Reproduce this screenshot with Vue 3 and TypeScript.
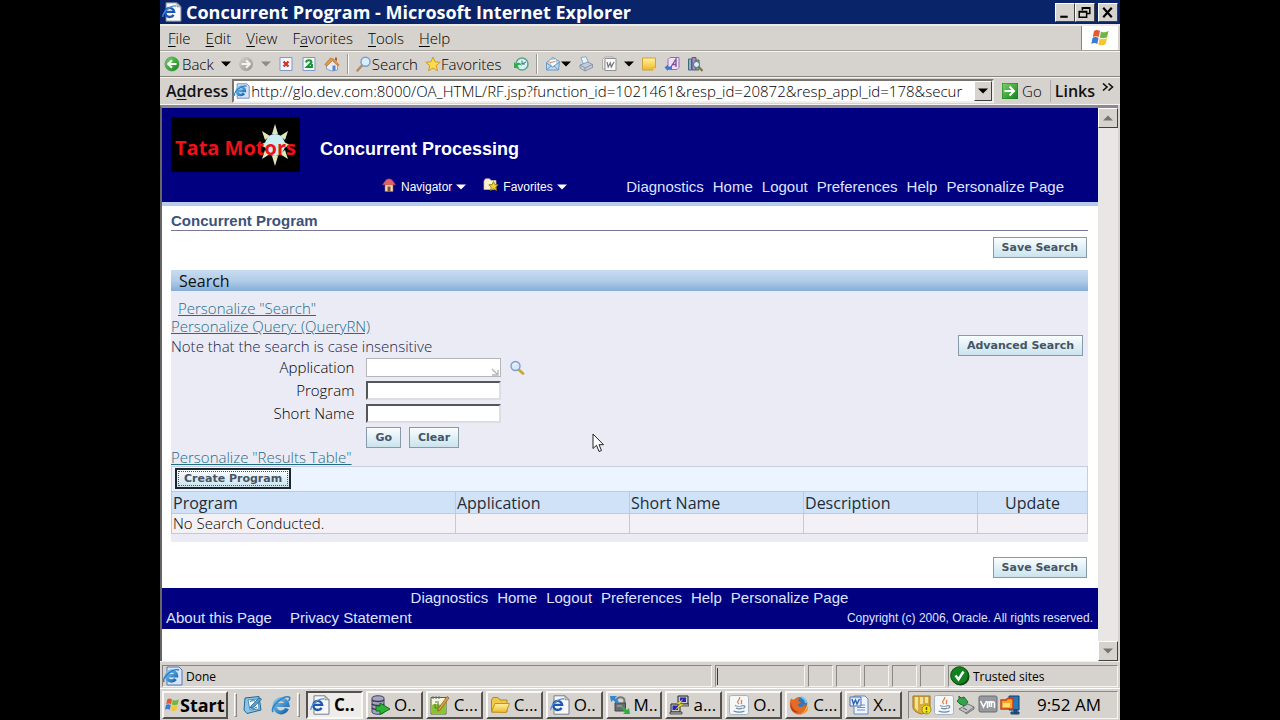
<script setup lang="ts">
import { ref } from 'vue'

interface Task {
  icon: string
  label: string
  active?: boolean
}

const menus = ['File', 'Edit', 'View', 'Favorites', 'Tools', 'Help']
const accessKeys = [0, 0, 0, 1, 0, 0]
const links = ['Diagnostics', 'Home', 'Logout', 'Preferences', 'Help', 'Personalize Page']
const tasks: Task[] = [
  { icon: 'page-ie', label: 'C..', active: true },
  { icon: 'server', label: 'O..' },
  { icon: 'notepad', label: 'C...' },
  { icon: 'folder', label: 'C...' },
  { icon: 'page-ie', label: 'O..' },
  { icon: 'lock', label: 'M..' },
  { icon: 'putty', label: 'a...' },
  { icon: 'java', label: 'O..' },
  { icon: 'firefox', label: 'C...' },
  { icon: 'word', label: 'X...' },
]
const address = ref('http://glo.dev.com:8000/OA_HTML/RF.jsp?function_id=1021461&resp_id=20872&resp_appl_id=178&secur')
const application = ref('')
const program = ref('')
const shortName = ref('')

function clearForm(): void {
  application.value = ''
  program.value = ''
  shortName.value = ''
}
</script>

<template>
  <svg class="defs" aria-hidden="true">
    <defs>
      <linearGradient id="g-green" x1="0" y1="0" x2="1" y2="1"><stop offset="0" stop-color="#7bd46a" /><stop offset="1" stop-color="#14801c" /></linearGradient>
      <linearGradient id="g-gray" x1="0" y1="0" x2="1" y2="1"><stop offset="0" stop-color="#d2d0cc" /><stop offset="1" stop-color="#96948f" /></linearGradient>
      <linearGradient id="g-blue" x1="0" y1="0" x2="1" y2="1"><stop offset="0" stop-color="#7cc8ee" /><stop offset="1" stop-color="#1763ae" /></linearGradient>
      <linearGradient id="g-yellow" x1="0" y1="0" x2="0" y2="1"><stop offset="0" stop-color="#fff3a0" /><stop offset="1" stop-color="#edb92c" /></linearGradient>
    </defs>
    <symbol id="e" viewBox="0 0 20 20">
      <path d="M16 13.500A6.500 6.500 0 1 1 16.500 10H5" fill="none" stroke="url(#g-blue)" stroke-width="4" />
      <path d="M2 17C-1 12 12 0 18 2c1.400.6.5 3-.6 4" fill="none" stroke="#2f83c8" stroke-width="1.600" />
    </symbol>
    <symbol id="page-ie" viewBox="0 0 20 20">
      <path d="M4 .8h11l4 4v14.400H4z" fill="#f8f8fb" stroke="#777c88" />
      <path d="M15 .8v4h4z" fill="#c8cdd8" stroke="#777c88" stroke-width=".7" />
      <path d="M11.600 12.800a4.500 4.500 0 1 1 .6-3H4" fill="none" stroke="#1b57b4" stroke-width="2.300" />
      <path d="M1 15C0 11 8 3 14 4" fill="none" stroke="#4a91dc" stroke-width="1.300" />
    </symbol>
    <symbol id="page-blue" viewBox="0 0 20 20">
      <path d="M4 1h12l3 3v15H4z" fill="#d6e5fa" stroke="#5577b5" />
      <path d="M12.500 13a5 5 0 1 1 1-3.200H4" fill="none" stroke="url(#g-blue)" stroke-width="3.400" />
      <path d="M1 16C-1 11 10 2 16 4" fill="none" stroke="#2b7cc3" stroke-width="1.400" />
    </symbol>
    <symbol id="back" viewBox="0 0 16 16">
      <circle cx="8" cy="8" r="7" fill="url(#g-green)" stroke="#3b9a3a" stroke-width=".7" />
      <path d="M12.500 8H4.500M8 4.200 4.200 8 8 11.800" fill="none" stroke="#fff" stroke-width="2" />
    </symbol>
    <symbol id="forward" viewBox="0 0 16 16">
      <circle cx="8" cy="8" r="7" fill="url(#g-gray)" />
      <path d="M3.500 8h8M8 4.200 11.800 8 8 11.800" fill="none" stroke="#f4f3f0" stroke-width="2" />
    </symbol>
    <symbol id="caret" viewBox="0 0 10 6"><path d="M0 .5h10L5 5.500z" fill="currentColor" /></symbol>
    <symbol id="stop" viewBox="0 0 14 16">
      <path d="M1 1.500h12v13H1z" fill="#f3f7ff" stroke="#7f98c4" />
      <path d="m4.500 5.500 5 5M9.500 5.500l-5 5" stroke="#d0341f" stroke-width="2.200" />
    </symbol>
    <symbol id="refresh" viewBox="0 0 14 16">
      <path d="M1 1.500h12v13H1z" fill="#eef7f4" stroke="#7f98c4" />
      <path d="M4 6.500C4.500 3.500 9.500 3.500 9.500 6.500L4.800 11H10M10 8v4" fill="none" stroke="#179132" stroke-width="1.900" />
    </symbol>
    <symbol id="home" viewBox="0 0 16 16">
      <path d="m2.500 8 5-4 6 4v6L8 15l-5.500-2z" fill="#e6eefb" stroke="#7892bd" stroke-width=".8" />
      <path d="M.8 8.500 6.500 2l3 1 5.700 6-2 .5-4.700-5-5.500 5.500z" fill="#e79a3d" stroke="#a8652a" stroke-width=".6" />
      <path d="M11 1.500h2v4l-2-2z" fill="#b95638" />
      <path d="M8.500 9.500h3v5l-3 .3z" fill="#5d83bb" />
    </symbol>
    <symbol id="magnifier" viewBox="0 0 16 16">
      <path d="M6 9.500 1.500 14.500" stroke="#b08b66" stroke-width="2.500" stroke-linecap="round" />
      <circle cx="9.500" cy="5.800" r="4.500" fill="#d8efff" stroke="#7b9dcc" stroke-width="1.400" />
    </symbol>
    <symbol id="lov" viewBox="0 0 16 16">
      <path d="m9.500 9.500 4.500 4" stroke="#c8a92c" stroke-width="2.800" stroke-linecap="round" />
      <circle cx="6.500" cy="6" r="4.500" fill="#d5e9fb" stroke="#7f9dc4" stroke-width="1.400" />
      <path d="M4.500 5.500c.5-1.500 2-2 3-1.500" stroke="#fff" fill="none" />
    </symbol>
    <symbol id="star" viewBox="0 0 16 16">
      <path d="m8 1 2 4.800 5.200.4-4 3.400 1.300 5.200L8 12l-4.500 2.800 1.300-5.200-4-3.400L6 5.800z" fill="#fbdc4e" stroke="#d09c24" />
    </symbol>
    <symbol id="history" viewBox="0 0 16 16">
      <circle cx="9" cy="8" r="6" fill="#d9f2ee" stroke="#5ba78a" stroke-width="1.600" />
      <path d="M9 4.500V8l4-2M9 8h3" fill="none" stroke="#45708f" />
      <path d="M1 6v6h5L4.500 9.800C6 8.500 7.500 8.500 9 10 8 6.500 5 6 2.800 8z" fill="#2faa4e" />
    </symbol>
    <symbol id="mail" viewBox="0 0 16 16">
      <path d="M1.500 6.500 8 1.500l6.500 4-1 8.500h-12z" fill="#b8dcf4" stroke="#6d98c3" />
      <path d="m4 4 7-1 1 6-5 2z" fill="#fff" stroke="#9ab0c9" stroke-width=".5" />
      <path d="M5 6.500 10.500 5.500" stroke="#e07a55" />
      <path d="M1.500 7 7.500 11 14 6.500M2 13.500 6 10M13 13.500 9 10" fill="none" stroke="#6d98c3" />
    </symbol>
    <symbol id="printer" viewBox="0 0 16 16">
      <path d="m3 1.500 5-.8 2.500 6-5 2z" fill="#e7f4ff" stroke="#87a8c8" />
      <path d="m2 9 8-3 4.500 2.500v3L7 15l-5-3z" fill="#c3ccd9" stroke="#7887a1" stroke-width=".8" />
      <path d="m2 9 5 3 7.500-3.500M7 12v3" fill="none" stroke="#7887a1" stroke-width=".8" />
    </symbol>
    <symbol id="edit-word" viewBox="0 0 16 16">
      <path d="M1.500 3.500 4 1h8v3H4v9H1.500z" fill="#eee" stroke="#969696" stroke-width=".7" />
      <path d="M4 2.500h11v12H4z" fill="#fbfbfb" stroke="#909090" />
      <path d="m6 6 1.200 5L9.300 7l1 4L13 6" fill="none" stroke="#777" stroke-width="1.200" />
    </symbol>
    <symbol id="note" viewBox="0 0 16 16"><path d="M1.500 2h13v9.500L12 14H1.500z" fill="url(#g-yellow)" stroke="#cfa138" /><path d="M12 14v-2.500h2.500" fill="#fff1ae" stroke="#cfa138" stroke-width=".7" /></symbol>
    <symbol id="discuss" viewBox="0 0 16 16">
      <path d="M4 3.500 6 1.500h9v10l-2 2H4z" fill="#eee1f3" stroke="#9a6cad" />
      <path d="m7 11 5-8v8M8.500 8.500H12" fill="none" stroke="#7e4d9d" stroke-width="1.300" />
      <path d="M8 8.500v6l-1-1.500H4v2L.5 11.500 4 8.500v2h3z" fill="#3d79cf" />
    </symbol>
    <symbol id="research" viewBox="0 0 16 16">
      <path d="M1.500 3h3v11h-3z" fill="#85b4cb" stroke="#466576" /><path d="M5 1.500h4V14H5z" fill="#a48bc2" stroke="#60557f" /><path d="M9 4h3v10H9z" fill="#8cab72" stroke="#58704d" />
      <circle cx="9.500" cy="8.500" r="3" fill="#d9edf8" stroke="#4b6790" /><path d="m12 11 3.500 4" stroke="#7c7547" stroke-width="2" />
    </symbol>
    <symbol id="go" viewBox="0 0 16 16">
      <path d="M0 0h16v16H0z" fill="url(#g-green)" stroke="#16801c" />
      <path d="M2.500 8h9M7.500 3.500 12 8l-4.500 4.500" fill="none" stroke="#fff" stroke-width="2" />
    </symbol>
    <symbol id="windows" viewBox="0 0 20 20">
      <path d="M4 3c2-1.500 4-1.200 6 0l-1.200 6c-2-1.200-4-1-6 0z" fill="#e65a31" />
      <path d="M11 3.500c2 1.300 4.500 1.200 7.500-.7l-1.300 6.200c-2.500 1.500-5 1.500-7.400.4z" fill="#72b545" />
      <path d="M2.500 10c2-1.200 4-1.200 6 0l-1.200 6c-2-1.200-4-1.200-6 0z" fill="#3b7bd2" />
      <path d="M9.600 10.500c2.400 1.200 5 1 7.400-.5l-1.300 6c-2.500 1.700-5 1.700-7.400.5z" fill="#f5c62f" />
    </symbol>
    <symbol id="hut" viewBox="0 0 14 14">
      <path d="M3 6h8v7.500H3z" fill="#f5d9b3" stroke="#9b6545" stroke-width=".6" /><path d="M.5 6.800 4 2l2-1h2l2 1 3.500 4.800z" fill="#e26067" stroke="#bb4450" stroke-width=".5" />
      <path d="M5.500 8.500h3v5h-3z" fill="#894b37" />
    </symbol>
    <symbol id="fav-folder" viewBox="0 0 16 14">
      <path d="M1 3 2.500.8h4L8 2.500h5v9H1z" fill="#fdf1d3" stroke="#d5bd8a" stroke-width=".7" />
      <path d="m10.500 3.500 1.400 3 3.300.3-2.500 2.200.8 3.500-3-1.800-3 1.800.8-3.500L5.800 6.800l3.300-.3z" fill="#f1d628" stroke="#807414" stroke-width=".8" />
    </symbol>
    <symbol id="sun" viewBox="0 0 40 44">
      <g fill="#dfe8b8"><path d="m20 1 3 10h-6zM20 43l3-10h-6zM7 8l8 5-5 4zM33 8l-8 5 5 4zM7 36l8-5-5-4zM33 36l-8-5 5-4zM5 22l6-3v6zM35 22l-6-3v6z" /></g>
      <ellipse cx="20" cy="22" rx="10" ry="11" fill="#c9eff2" />
    </symbol>
    <symbol id="desktop" viewBox="0 0 20 20">
      <path d="M2 3 16 1.500 18 15 4 18.500 1 15z" fill="#8cc5eb" stroke="#25648f" /><path d="m5 5 10-1 1 10-9 1z" fill="#fff" stroke="#468eb9" />
      <path d="m8 11 8-8 2.500 1L11 12l-3.500 1z" fill="#50a5d8" stroke="#25648f" stroke-width=".8" /><path d="M7 7c1-1.500 3-1.500 5-1M7 12c1 2 4 2 7 0" fill="none" stroke="#276e9f" />
    </symbol>
    <symbol id="server" viewBox="0 0 20 20">
      <path d="M2 3c0-3 12-3 12 0v14c0 3-12 3-12 0z" fill="#a7a4bf" stroke="#444163" /><path d="M2 5c2 2 10 2 12 0M2 9c2 2 10 2 12 0M2 13c2 2 10 2 12 0" fill="none" stroke="#3b3858" stroke-width="1.400" />
      <path d="M10 8v3H6v5h4v3.500L20 14z" fill="#2eb238" stroke="#126e1b" />
    </symbol>
    <symbol id="notepad" viewBox="0 0 20 20">
      <path d="M1 2.500h15V19H1z" fill="#f3f5dd" stroke="#4b6734" /><path d="M2 10c4-3 9 3 13-3v11H2z" fill="#8bc32e" /><path d="M5 7h4M5 9v4h4M8 8v4" stroke="#59714a" fill="none" />
      <path d="m8 14 9-12.500 2 1.500L10 15l-2.500 1z" fill="#e2a43f" stroke="#8a5e22" stroke-width=".8" />
      <path d="M3 1v3M6 1v3M9 1v3" stroke="#777" />
    </symbol>
    <symbol id="folder" viewBox="0 0 20 20"><path d="M1.500 17V5L3 2.500h5L10 5h7v12z" fill="#efc94a" stroke="#b78720" /><path d="M1.500 17 5 8.500h14.500L16 17.500z" fill="url(#g-yellow)" stroke="#c49325" /></symbol>
    <symbol id="lock" viewBox="0 0 20 20">
      <path d="M6.500 9V6c0-5 8-5 8 0v3" fill="none" stroke="#77797e" stroke-width="2.200" /><path d="M5 8h10.500v8H5z" fill="#686b71" stroke="#42464b" /><path d="M7 11h5" stroke="#b5b7bb" />
      <path d="M0 1h7L5 3l4 4-2 2-4-4-2 2z" fill="#2f87d1" /><path d="M20 19h-7l2-2-4-4 2-2 4 4 2-2z" fill="#31ad3d" />
    </symbol>
    <symbol id="putty" viewBox="0 0 20 20">
      <path d="M9 1h10v8H9z" fill="#cbcbcb" stroke="#222" /><path d="M11 2.500h6v4.500h-6z" fill="#2226c5" /><path d="M2 9h9v8H2z" fill="#cbcbcb" stroke="#222" /><path d="M3.500 10.500H9V15H3.500z" fill="#2226c5" />
      <path d="M1 17h12v2H1zM9 9h11v2H9z" fill="#bbb" stroke="#222" stroke-width=".7" /><path d="m14 4-7 5h4l-5 6 9-6h-4z" fill="#f5e34d" stroke="#88781e" stroke-width=".5" />
    </symbol>
    <symbol id="java" viewBox="0 0 20 20">
      <rect x=".5" y=".5" width="19" height="19" rx="2" fill="#f6f7f9" stroke="#a6b4c2" />
      <path d="M10 9C6 6 12 5 10.500 2M12 9c2-2-1-2 1-4" fill="none" stroke="#df8050" stroke-width="1.300" /><path d="M6 10.500c2 1 6 1 8 0M7 13c2 .8 5 .8 6 0M4.500 16c4 1.500 8 1.500 11 0M14 10.500c3 0 2 2.500-.5 3" fill="none" stroke="#688aaa" stroke-width="1.200" />
    </symbol>
    <symbol id="firefox" viewBox="0 0 20 20">
      <circle cx="11" cy="9.500" r="7.500" fill="#3277bd" /><path d="M12 2c3 1 5 3 5 6" stroke="#79c5ed" stroke-width="2" fill="none" />
      <path d="M2 3.500 5 5c2-2 4-2.500 6-2C9 4 9 5 9.500 6L12 7.500 9 9.500c1 4 6 3 7-1 1 2 0 4-1 5 2-1 3-3 3-6 4 8-3 12-8 12C2 19.500-1 10 2 3.500z" fill="#e46b21" /><path d="M2 7c0 5 3 9 8 10-5 2-10-2-8-10z" fill="#b93c20" /><path d="M18.500 7c2 6-2 11-7 12 4-2 6-5 7-12z" fill="#f9ca38" />
    </symbol>
    <symbol id="word" viewBox="0 0 20 20">
      <path d="M5 1h11l3 3v15H5z" fill="#eef4ff" stroke="#6789bd" /><path d="M8 10h8M8 12.500h8M8 15h8" stroke="#6990c8" /><path d="M1 2h11v9H1z" fill="#e2ecfd" stroke="#486eaf" /><path d="m3 4 1.500 5 2-4 1.500 4L10.500 4" fill="none" stroke="#3465af" stroke-width="1.400" />
    </symbol>
    <symbol id="shield" viewBox="0 0 20 20"><path d="M1 1h17v11c0 4-5 6-8.500 7C6 18 1 16 1 12z" fill="#d8ad3e" stroke="#977421" /><path d="M3 2h3v14l-3-3zM8 2h3v7H8zM13 2h3v6h-3z" fill="#f6e39a" /><circle cx="14.500" cy="14.500" r="4.500" fill="#f1e321" stroke="#9a901a" /><path d="M14.500 12v3M14.500 16v1.500" stroke="#5d5710" stroke-width="1.400" /></symbol>
    <symbol id="eject" viewBox="0 0 20 20"><path d="m3 1 2 2 3-1 4 5-3 4-5-2-3-3 2-2z" fill="#34a34a" stroke="#16702a" /><path d="m3 14 9-5 6 3-8 6zM10 18v1l8-5v-2" fill="#c3c7c8" stroke="#6d7272" /><path d="m7 13 4 2" stroke="#5a5e5e" /></symbol>
    <symbol id="vm" viewBox="0 0 20 20"><rect x="1" y="1" width="18" height="16" rx="1.500" fill="#96999d" stroke="#696c70" /><path d="m2.500 6 3 6 3-6M9.500 13V7l2 0v5M11.500 7c2-1 2 0 2 1v4M13.500 8c1.500-2 3-1 3 0v5" fill="none" stroke="#fff" stroke-width="1.500" /></symbol>
    <symbol id="monitors" viewBox="0 0 20 20"><path d="M9 1h10v14H9zM11 17h8v2h-8zM14 15h3v3h-3z" fill="#2778bd" stroke="#183c64" /><path d="M1 5h5l1.500-1.500H13V14H1z" fill="#f4a524" stroke="#c13d19" stroke-width="1.400" /><path d="M3 8h7v4H3z" fill="#ffe078" /></symbol>
    <symbol id="check" viewBox="0 0 20 20"><circle cx="10.500" cy="10.500" r="9" fill="#173c18" /><circle cx="9.500" cy="9.500" r="8.800" fill="#128221" stroke="#07500d" /><path d="m5.500 9.500 3 4 5-8" fill="none" stroke="#fff" stroke-width="2.400" /></symbol>
  </svg>

  <div class="screen">
    <div class="window">
      <header class="title-bar">
        <svg class="icon20"><use href="#page-ie" /></svg>
        <h1>Concurrent Program - Microsoft Internet Explorer</h1>
        <div class="window-buttons">
          <button type="button" aria-label="Minimize"><svg viewBox="0 0 16 14"><path d="M4 11h7" stroke="#000" stroke-width="2" /></svg></button>
          <button type="button" aria-label="Restore"><svg viewBox="0 0 16 14"><path d="M6 5V2.500h7V8h-3M6 3h7" fill="none" stroke="#000" stroke-width="1.400" /><path d="M3 6h7v5.500H3zM3 6.500h7" fill="none" stroke="#000" stroke-width="1.400" /></svg></button>
          <button type="button" class="close" aria-label="Close"><svg viewBox="0 0 16 14"><path d="m4 2.500 8 9M12 2.500l-8 9" stroke="#000" stroke-width="2" /></svg></button>
        </div>
      </header>

      <nav class="menu-bar">
        <button v-for="(m, i) in menus" :key="m" type="button">{{ m.slice(0, accessKeys[i]) }}<u>{{ m[accessKeys[i]] }}</u>{{ m.slice(accessKeys[i] + 1) }}</button>
        <div class="throbber"><svg class="icon20"><use href="#windows" /></svg></div>
      </nav>

      <div class="tool-bar">
        <button type="button"><svg class="icon16"><use href="#back" /></svg>Back</button>
        <svg class="caret"><use href="#caret" /></svg>
        <button type="button" aria-label="Forward"><svg class="icon16"><use href="#forward" /></svg></button>
        <svg class="caret dim"><use href="#caret" /></svg>
        <button type="button" aria-label="Stop"><svg class="icon16"><use href="#stop" /></svg></button>
        <button type="button" aria-label="Refresh"><svg class="icon16"><use href="#refresh" /></svg></button>
        <button type="button" aria-label="Home"><svg class="icon16"><use href="#home" /></svg></button>
        <i class="divider"></i>
        <button type="button" class="tight"><svg class="icon16"><use href="#magnifier" /></svg>Search</button>
        <button type="button" class="tight"><svg class="icon16"><use href="#star" /></svg>Favorites</button>
        <button type="button" class="history" aria-label="History"><svg class="icon16"><use href="#history" /></svg></button>
        <i class="divider"></i>
        <button type="button" class="mail" aria-label="Mail"><svg class="icon16"><use href="#mail" /></svg><svg class="caret"><use href="#caret" /></svg></button>
        <button type="button" aria-label="Print"><svg class="icon16"><use href="#printer" /></svg></button>
        <button type="button" aria-label="Edit"><svg class="icon16"><use href="#edit-word" /></svg></button>
        <svg class="caret"><use href="#caret" /></svg>
        <button type="button" aria-label="Note"><svg class="icon16"><use href="#note" /></svg></button>
        <button type="button" aria-label="Discuss"><svg class="icon16"><use href="#discuss" /></svg></button>
        <button type="button" aria-label="Research"><svg class="icon16"><use href="#research" /></svg></button>
      </div>

      <div class="address-bar">
        <label for="address">A<u>d</u>dress</label>
        <div class="address-box">
          <svg class="icon16"><use href="#page-blue" /></svg>
          <input id="address" v-model="address" type="text" spellcheck="false" />
          <button type="button" aria-label="Show addresses"><svg class="caret"><use href="#caret" /></svg></button>
        </div>
        <button type="button" class="go"><svg class="icon16"><use href="#go" /></svg>Go</button>
        <button type="button" class="links">Links</button>
        <svg class="chevrons" viewBox="0 0 12 8"><path d="m1 .5 4 3.500-4 3.500M6.500.5l4 3.500-4 3.500" fill="none" stroke="#111" stroke-width="1.600" /></svg>
      </div>

      <div class="viewport">
        <main class="page">
          <header class="brand">
            <div class="brand-top">
              <div class="logo"><svg><use href="#sun" /></svg><span>Tata Motors</span></div>
              <h2>Concurrent Processing</h2>
            </div>
            <div class="brand-nav">
              <div class="dropdowns">
                <a href="#"><svg class="hut"><use href="#hut" /></svg>Navigator<svg class="caret"><use href="#caret" /></svg></a>
                <a href="#"><svg class="fav"><use href="#fav-folder" /></svg>Favorites<svg class="caret"><use href="#caret" /></svg></a>
              </div>
              <nav class="links-row"><a v-for="l in links" :key="l" href="#">{{ l }}</a></nav>
            </div>
          </header>

          <section class="content">
            <h3>Concurrent Program</h3>
            <div class="actions top"><button type="button" class="btn">Save Search</button></div>
            <h4>Search</h4>
            <div class="panel">
              <a href="#" class="p-link inset">Personalize "Search"</a>
              <a href="#" class="p-link">Personalize Query: (QueryRN)</a>
              <div class="note-row">
                <span>Note that the search is case insensitive</span>
                <button type="button" class="btn">Advanced Search</button>
              </div>
              <form @submit.prevent>
                <label for="application">Application</label>
                <div class="lov-field">
                  <input id="application" v-model="application" class="lov-input" type="text" />
                  <svg class="corner" viewBox="0 0 8 8"><path d="m1 1 5 5M7 2v5H1" fill="none" stroke="#b5b5b5" stroke-width="1.400" /></svg>
                </div>
                <button type="button" class="lov-button" aria-label="Search for application"><svg class="icon16"><use href="#lov" /></svg></button>
                <label for="program">Program</label>
                <input id="program" v-model="program" type="text" />
                <label for="short-name">Short Name</label>
                <input id="short-name" v-model="shortName" type="text" />
                <div class="form-buttons">
                  <button type="submit" class="btn">Go</button>
                  <button type="button" class="btn" @click="clearForm">Clear</button>
                </div>
              </form>
              <a href="#" class="p-link">Personalize "Results Table"</a>
              <div class="table-bar"><button type="button" class="btn focused">Create Program</button></div>
              <table>
                <thead>
                  <tr><th class="c1">Program</th><th class="c2">Application</th><th class="c2">Short Name</th><th class="c2">Description</th><th class="update">Update</th></tr>
                </thead>
                <tbody>
                  <tr><td>No Search Conducted.</td><td></td><td></td><td></td><td></td></tr>
                </tbody>
              </table>
            </div>
            <div class="actions bottom"><button type="button" class="btn">Save Search</button></div>
          </section>

          <footer class="page-footer">
            <nav class="links-row"><a v-for="l in links" :key="l" href="#">{{ l }}</a></nav>
            <div class="legal">
              <a href="#">About this Page</a>
              <a href="#">Privacy Statement</a>
              <small>Copyright (c) 2006, Oracle. All rights reserved.</small>
            </div>
          </footer>
        </main>
        <div class="scrollbar">
          <button type="button" aria-label="Scroll up"><svg class="caret up"><use href="#caret" /></svg></button>
          <button type="button" aria-label="Scroll down"><svg class="caret"><use href="#caret" /></svg></button>
        </div>
      </div>

      <div class="status-bar">
        <div class="pane main"><svg class="icon20"><use href="#page-blue" /></svg>Done</div>
        <div class="pane progress"><i></i></div>
        <div v-for="n in 5" :key="n" class="pane tiny"></div>
        <div class="pane zone"><svg class="icon20"><use href="#check" /></svg>Trusted sites</div>
      </div>

      <div class="task-bar">
        <button type="button" class="start"><svg class="icon16"><use href="#windows" /></svg>Start</button>
        <i class="grip"></i>
        <button type="button" class="quick" aria-label="Show desktop"><svg class="icon20"><use href="#desktop" /></svg></button>
        <button type="button" class="quick" aria-label="Internet Explorer"><svg class="icon20"><use href="#e" /></svg></button>
        <i class="grip"></i>
        <div class="tasks">
          <button v-for="(t, i) in tasks" :key="i" type="button" class="task" :class="{ active: t.active }">
            <svg class="icon20"><use :href="'#' + t.icon" /></svg>{{ t.label }}
          </button>
        </div>
        <div class="tray">
          <svg class="icon20"><use href="#shield" /></svg>
          <svg class="icon20"><use href="#java" /></svg>
          <svg class="icon20"><use href="#eject" /></svg>
          <svg class="icon20"><use href="#vm" /></svg>
          <svg class="icon20"><use href="#monitors" /></svg>
          <time>9:52 AM</time>
        </div>
      </div>

      <svg class="pointer" viewBox="0 0 12 20"><path d="M1 1v14.500l3.500-3.200L7 18.500l2.500-1L7 11.700h4.500z" fill="#fff" stroke="#222" /></svg>
    </div>
  </div>
</template>

<style>
body {
  background: #000;
}
</style>

<style scoped>
* {
  box-sizing: border-box;
}
.defs {
  position: absolute;
  width: 0;
  height: 0;
}
.screen {
  min-height: 100vh;
  display: flex;
  justify-content: center;
  background: #000;
}
.window {
  position: relative;
  width: 75%;
  min-height: 100vh;
  display: flex;
  flex-direction: column;
  background: #d6d3ce;
  color: #000;
  font-family: "Open Sans", "Noto Sans", sans-serif;
  font-size: 15px;
  font-weight: 300;
}
button {
  margin: 0;
  padding: 0;
  border: 0;
  background: none;
  color: inherit;
  font: inherit;
  white-space: nowrap;
}
svg {
  display: block;
  flex: none;
}
u {
  text-underline-offset: 2px;
}
.icon16 {
  width: 16px;
  height: 16px;
}
.icon20 {
  width: 20px;
  height: 20px;
}
.caret {
  width: 10px;
  height: 6px;
  color: #000;
}
.caret.dim {
  color: #8e8c88;
}

.title-bar {
  display: flex;
  align-items: center;
  gap: 4px;
  height: 24px;
  padding: 0 2px;
  background: #0a246a;
  color: #fff;
}
.title-bar h1 {
  flex: 1;
  margin: 0;
  font-size: 18px;
  line-height: 24px;
  font-weight: 700;
}
.window-buttons {
  display: flex;
}
.window-buttons button,
.scrollbar button,
.address-box button {
  background: #d6d3ce;
  border: 1px solid;
  border-color: #fff #404040 #404040 #fff;
}
.window-buttons button {
  width: 20px;
  height: 19px;
}
.window-buttons svg {
  width: 17px;
  height: 15px;
}
.window-buttons .close {
  margin-left: 3px;
}

.menu-bar {
  display: flex;
  align-items: center;
  gap: 15px;
  height: 27px;
  padding-left: 8px;
  border-top: 2px solid #eceae6;
  border-bottom: 1px solid #a5a29c;
}
.throbber {
  align-self: stretch;
  display: flex;
  align-items: center;
  justify-content: center;
  width: 37px;
  margin: 0 2px 0 auto;
  background: #fff;
  border-left: 1px solid #88857f;
}
.tool-bar {
  display: flex;
  align-items: center;
  gap: 7px;
  height: 26px;
  padding-left: 4px;
  border-top: 1px solid #f5f4f1;
  border-bottom: 1px solid #88857f;
}
.tool-bar button {
  display: flex;
  align-items: center;
  gap: 2px;
}
.tool-bar .tight {
  gap: 0;
}
.tool-bar .history {
  margin-left: 4px;
}
.tool-bar .mail {
  gap: 0;
}
.divider {
  width: 2px;
  height: 20px;
  border-left: 1px solid #999;
  border-right: 1px solid #fff;
}
.address-bar {
  display: flex;
  align-items: center;
  height: 28px;
  padding: 0 6px;
  border-top: 1px solid #f5f4f1;
  border-bottom: 1px solid #f5f4f1;
}
.address-bar label,
.address-bar .links {
  font-size: 16px;
  font-weight: 600;
  color: #111;
}
.address-box {
  flex: 1;
  min-width: 0;
  display: flex;
  align-items: center;
  height: 24px;
  margin-left: 4px;
  background: #fff;
  border: 2px solid;
  border-color: #77746f #f0eeea #f0eeea #77746f;
}
.address-box input {
  flex: 1;
  min-width: 0;
  height: 20px;
  margin-left: 1px;
  padding: 0;
  border: 0;
  background: none;
  color: #000;
  font: inherit;
  outline: 0;
}
.address-box button {
  display: flex;
  align-items: center;
  justify-content: center;
  width: 18px;
  height: 20px;
}
.go {
  display: flex;
  align-items: center;
  gap: 4px;
  margin: 0 8px;
}
.address-bar .links {
  padding-left: 4px;
  border-left: 1px solid #aaa;
}
.chevrons {
  align-self: flex-start;
  width: 12px;
  height: 8px;
  margin: 5px 0 0 7px;
}

.viewport {
  flex: 1;
  display: flex;
  margin-right: 2px;
  border-top: 3px solid #8b8894;
  border-left: 2px solid #666;
  background: #fff;
}
.page {
  flex: 1;
  min-width: 0;
  color: #000;
}
.page a {
  color: inherit;
  text-decoration: none;
}
.brand {
  padding: 9px 34px 0 9px;
  height: 98px;
  background: #000080;
  border-bottom: 4px solid #b5cdea;
  color: #fff;
  font-family: "Liberation Sans", Arial, sans-serif;
}
.brand-top {
  display: flex;
  align-items: center;
  gap: 20px;
}
.logo {
  position: relative;
  display: flex;
  align-items: center;
  width: 129px;
  height: 55px;
  padding: 6px 0 0 4px;
  background: #000;
}
.logo svg {
  position: absolute;
  right: 5px;
  top: 6px;
  width: 40px;
  height: 44px;
}
.logo span {
  position: relative;
  color: #f01018;
  font: 700 20px/24px "Open Sans", "Noto Sans", sans-serif;
  white-space: nowrap;
}
.brand h2 {
  margin: 8px 0 0;
  font-size: 18px;
  line-height: 24px;
}
.brand-nav {
  display: flex;
  align-items: center;
  justify-content: space-between;
  margin-top: 5px;
  padding-left: 211px;
}
.dropdowns {
  display: flex;
  gap: 17px;
  font-size: 12px;
  line-height: 20px;
}
.dropdowns a {
  display: flex;
  align-items: center;
}
.dropdowns .caret {
  margin-left: 4px;
  color: #fff;
}
.hut {
  width: 14px;
  height: 14px;
  margin: 0 5px 4px 0;
}
.fav {
  width: 16px;
  height: 14px;
  margin: 0 4px 4px 0;
}
.links-row {
  display: flex;
  gap: 9px;
  font-size: 15px;
  line-height: 20px;
  color: #dfe4ff;
  white-space: nowrap;
}
.content {
  padding: 6px 10px 10px 9px;
}
.content h3 {
  margin: 0;
  border-bottom: 1px solid #787896;
  color: #3b5378;
  font: 700 15px/18px "Liberation Sans", Arial, sans-serif;
}
.actions {
  display: flex;
  justify-content: flex-end;
  padding-right: 1px;
}
.actions.top {
  padding-top: 6px;
  padding-bottom: 12px;
}
.actions.bottom {
  padding-top: 15px;
}
.btn {
  height: 21px;
  padding: 0 8px;
  border: 1px solid #8899a8;
  background: linear-gradient(#fafdfe, #dceef4 60%, #cbe3ed);
  color: #465466;
  font: 700 11px/18px "DejaVu Sans", Verdana, sans-serif;
}
.content h4 {
  margin: 0;
  padding: 1px 0 0 8px;
  background: linear-gradient(#c7dcf1, #b2cde8 50%, #85aed8);
  color: #111;
  font-size: 16px;
  line-height: 20px;
  font-weight: 500;
}
.panel {
  padding: 8px 0;
  background: #ebebf6;
}
.p-link {
  display: table;
  font-size: 15px;
  line-height: 18px;
}
.page a.p-link {
  color: #1f6d87;
  text-decoration: underline;
}
.inset {
  margin-left: 7px;
}
.note-row {
  display: flex;
  align-items: center;
  justify-content: space-between;
  padding-right: 5px;
  color: #15244a;
}
form {
  display: grid;
  grid-template-columns: calc(20% + 4px) 135px 20px;
  column-gap: 8px;
  row-gap: 4px;
  margin-top: 2px;
}
form label {
  grid-column: 1;
  padding-right: 4px;
  text-align: right;
  line-height: 19px;
}
form input {
  display: block;
  width: 100%;
  height: 19px;
  padding: 0 2px;
  border: 2px solid;
  border-color: #55565c #dddde4 #dddde4 #55565c;
  background: #fff;
  font: inherit;
  outline: 0;
}
form .lov-input {
  border: 1px solid #b3b5bb;
}
.lov-field {
  position: relative;
}
.corner {
  position: absolute;
  right: 2px;
  bottom: 1px;
  width: 8px;
  height: 8px;
}
.form-buttons {
  grid-column: 2 / 4;
  display: flex;
  gap: 8px;
}
.table-bar {
  display: flex;
  padding: 1px 3px 2px;
  border: 1px solid #cacddb;
  border-bottom: 0;
  background: #ecf5ff;
}
.btn.focused {
  border: 2px solid #1c2530;
  outline: 1px dotted #555;
  outline-offset: -4px;
  padding: 0 7px;
  line-height: 16px;
}
table {
  width: 100%;
  table-layout: fixed;
  border-collapse: collapse;
}
th,
td {
  height: 20px;
  padding: 0 1px;
  border: 1px solid #c5c9d4;
  line-height: 19px;
  text-align: left;
  white-space: nowrap;
}
th {
  padding-top: 1px;
  background: #cfe2f7;
  color: #1f2c38;
  font-size: 16px;
  line-height: 20px;
  font-weight: 500;
}
td {
  background: #f3f1f5;
  font-size: 15px;
}
.c1 {
  width: 31%;
}
.c2 {
  width: 19%;
}
th.update {
  text-align: center;
}
.page-footer {
  padding: 0 5px 1px 4px;
  background: #000080;
  color: #dfe4ff;
  font-family: "Liberation Sans", Arial, sans-serif;
}
.page-footer .links-row {
  justify-content: center;
}
.legal {
  display: flex;
  align-items: center;
  gap: 18px;
  font-size: 15px;
  line-height: 20px;
}
.legal small {
  margin-left: auto;
  font-size: 12px;
}
.scrollbar {
  display: flex;
  flex-direction: column;
  justify-content: space-between;
  width: 20px;
  background: #e9e7e5;
}
.scrollbar button {
  display: flex;
  align-items: center;
  justify-content: center;
  width: 20px;
  height: 20px;
}
.scrollbar .caret {
  color: #77746f;
}
.up {
  transform: rotate(180deg);
}

.status-bar {
  display: flex;
  gap: 3px;
  height: 27px;
  padding: 3px 2px 1px;
  border-top: 1px solid #f0eeea;
  font-size: 12px;
  font-weight: 400;
}
.pane {
  display: flex;
  align-items: center;
  gap: 3px;
  border: 1px solid;
  border-color: #8b8883 #f5f4f1 #f5f4f1 #8b8883;
}
.pane.main {
  flex: 1;
}
.pane.progress {
  width: 90px;
}
.pane.progress i {
  width: 1px;
  height: 17px;
  margin-left: 1px;
  background: #26347e;
}
.pane.tiny {
  width: 25px;
}
.pane.zone {
  width: 170px;
  padding-left: 1px;
}

.task-bar {
  display: flex;
  align-items: center;
  gap: 6px;
  height: 32px;
  padding: 0 2px;
  border-top: 1px solid #fff;
  font-weight: 400;
}
.start,
.task {
  display: flex;
  align-items: center;
  height: 28px;
  border: 2px solid;
  border-color: #faf9f7 #55524e #55524e #faf9f7;
  color: #000;
}
.start {
  width: 66px;
  font-size: 18px;
  font-weight: 700;
}
.grip {
  width: 3px;
  height: 24px;
  border: 1px solid;
  border-color: #fff #8b8883 #8b8883 #fff;
}
.quick + .quick {
  margin-left: 2px;
}
.tasks {
  flex: 1;
  display: flex;
  gap: 3px;
}
.task {
  flex: 1;
  gap: 4px;
  min-width: 0;
  padding-left: 2px;
  overflow: hidden;
  font-size: 17px;
}
.task.active {
  border-color: #55524e #faf9f7 #faf9f7 #55524e;
  background: #eeece9;
  font-weight: 700;
}
.tray {
  display: flex;
  align-items: center;
  gap: 2px;
  width: 210px;
  height: 28px;
  padding: 0 16px 0 3px;
  border: 1px solid;
  border-color: #8b8883 #f5f4f1 #f5f4f1 #8b8883;
}
.tray time {
  margin-left: auto;
  color: #000;
  font-size: 17px;
  white-space: nowrap;
}
.pointer {
  position: absolute;
  left: 45%;
  top: 433px;
  width: 12px;
  height: 20px;
  pointer-events: none;
}
</style>
